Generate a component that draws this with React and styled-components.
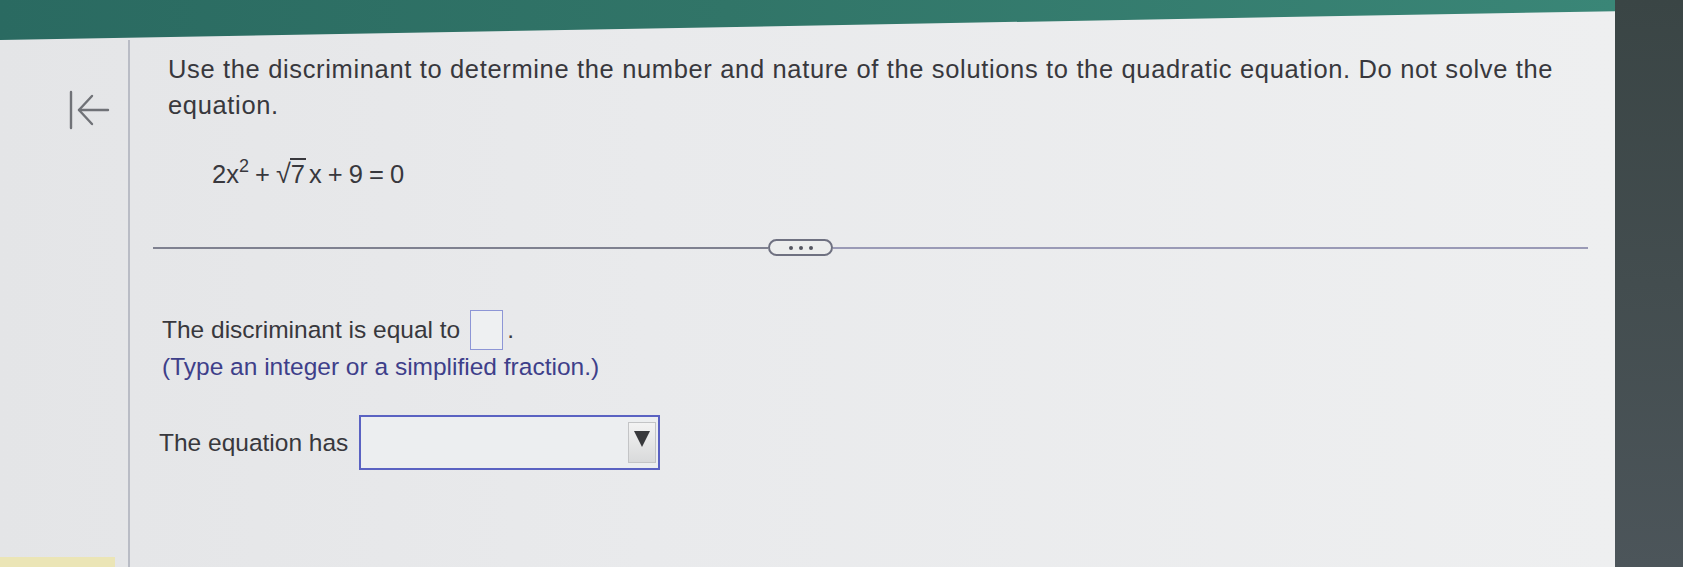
import React from 'react'
import styled, { createGlobalStyle } from 'styled-components'

const GlobalStyle = createGlobalStyle`
  html, body {
    margin: 0;
    padding: 0;
    background: #e9eaec;
    overflow: hidden;
  }
  * {
    box-sizing: border-box;
  }
`

const Screen = styled.div`
  display: flex;
  width: 1683px;
  height: 567px;
  font-family: "Liberation Sans", Arial, sans-serif;
  color: #38383d;
`

const Window = styled.div`
  flex: 1;
  display: flex;
  flex-direction: column;
  background: linear-gradient(90deg, #e4e5e7 0%, #e9eaec 40%, #eeeff0 100%);
`

const Header = styled.div`
  height: 40px;
  flex-shrink: 0;
  background: linear-gradient(90deg, #2a6a61 0%, #317568 45%, #3a8677 100%);
  clip-path: polygon(0 0, 100% 0, 100% 28%, 0 100%);
`

const Body = styled.div`
  flex: 1;
  display: flex;
`

const Sidebar = styled.div`
  width: 130px;
  flex-shrink: 0;
  display: flex;
  flex-direction: column;
  padding: 50px 0 0 68px;
  border-right: 2px solid #b9bcc5;
`

const BackButton = styled.button`
  width: 42px;
  height: 40px;
  padding: 0;
  border: none;
  background: transparent;
  color: #707277;
  cursor: pointer;
`

const Note = styled.div`
  margin-top: auto;
  margin-left: -68px;
  width: 115px;
  height: 10px;
  background: #ebe5b6;
`

const Content = styled.div`
  flex: 1;
  display: flex;
  flex-direction: column;
  padding-top: 11px;
`

const Question = styled.p`
  margin: 0 0 0 ${p => p.$indent}px;
  max-width: 1420px;
  font-size: 25.5px;
  line-height: 36px;
  letter-spacing: 0.65px;
`

const Equation = styled.div`
  margin: ${p => p.$top}px 0 0 ${p => p.$indent}px;
  font-size: 25.5px;
  line-height: 34px;
  white-space: pre;
  word-spacing: -1px;

  sup {
    font-size: 18px;
    line-height: 0;
    vertical-align: 11px;
  }
`

const Radical = styled.span`
  font-size: 27px;
  margin-right: -1px;
`

const Radicand = styled.span`
  border-top: 2px solid #38383d;
  padding: 0 1px;
  margin-right: 3px;
`

const DividerRow = styled.div`
  display: flex;
  align-items: center;
  margin: ${p => p.$top}px 0 0 ${p => p.$indent}px;
  width: 1435px;
  height: 17px;
`

const Rule = styled.div`
  height: 2px;
  background: ${p => p.$color};
  ${p => (p.$width ? `width: ${p.$width}px;` : 'flex: 1;')}
`

const MoreButton = styled.button`
  width: 65px;
  height: 17px;
  display: flex;
  align-items: center;
  justify-content: center;
  gap: 6px;
  padding: 0;
  border: 2px solid #6f7181;
  border-radius: 9px;
  background: #eceded;

  span {
    width: 4px;
    height: 4px;
    border-radius: 50%;
    background: #555660;
  }
`

const Row = styled.div`
  display: flex;
  align-items: center;
  margin: ${p => p.$top}px 0 0 ${p => p.$indent}px;
  font-size: 24.5px;
  line-height: ${p => p.$height}px;
  height: ${p => p.$height}px;
`

const Hint = styled.div`
  margin: ${p => p.$top}px 0 0 ${p => p.$indent}px;
  font-size: 24.5px;
  line-height: 30px;
  color: #3e3f8a;
`

const AnswerBox = styled.input`
  width: 33px;
  height: 40px;
  margin: 0 4px 0 10px;
  padding: 0;
  border: 1.5px solid #8d96d6;
  background: #eef0f2;
  outline: none;
`

const Select = styled.div`
  width: 301px;
  height: 55px;
  margin-left: 11px;
  display: flex;
  align-items: center;
  justify-content: flex-end;
  padding-right: 2px;
  border: 2px solid #5a62c2;
  background: #eceef0;
`

const SelectArrow = styled.div`
  width: 28px;
  height: 41px;
  display: flex;
  justify-content: center;
  padding-top: 8px;
  border: 1px solid #c3c4c6;
  background: linear-gradient(#f3f3f3, #d9dadb);

  &::after {
    content: '';
    width: 0;
    height: 0;
    border-left: 8px solid transparent;
    border-right: 8px solid transparent;
    border-top: 16px solid #38393c;
  }
`

const DarkEdge = styled.div`
  width: 68px;
  flex-shrink: 0;
  background: linear-gradient(180deg, #3a4545 0%, #434d4f 50%, #4c555a 100%);
`

function BackArrow() {
  return (
    <svg width="42" height="40" viewBox="0 0 42 40" fill="none" stroke="currentColor" strokeWidth="2.4" strokeLinecap="round" strokeLinejoin="round">
      <path d="M3 2 L3 38" />
      <path d="M11 20 L40 20" />
      <path d="M24 6 L11 20 L24 34" />
    </svg>
  )
}

export default function App() {
  return (
    <Screen>
      <GlobalStyle />
      <Window>
        <Header />
        <Body>
          <Sidebar>
            <BackButton aria-label="Back">
              <BackArrow />
            </BackButton>
            <Note />
          </Sidebar>
          <Content>
            <Question $indent={38}>
              Use the discriminant to determine the number and nature of the solutions to the quadratic equation. Do not solve the equation.
            </Question>
            <Equation $top={34} $indent={82}>
              2x<sup>2</sup> + <Radical>√</Radical><Radicand>7</Radicand>x + 9 = 0
            </Equation>
            <DividerRow $top={48} $indent={23}>
              <Rule $width={615} $color="#7f8190" />
              <MoreButton aria-label="More">
                <span />
                <span />
                <span />
              </MoreButton>
              <Rule $color="#9a9ab6" />
            </DividerRow>
            <Row $top={54} $indent={32} $height={40}>
              The discriminant is equal to
              <AnswerBox aria-label="discriminant" />.
            </Row>
            <Hint $top={2} $indent={32}>(Type an integer or a simplified fraction.)</Hint>
            <Row $top={33} $indent={29} $height={55}>
              The equation has
              <Select>
                <SelectArrow />
              </Select>
            </Row>
          </Content>
        </Body>
      </Window>
      <DarkEdge />
    </Screen>
  )
}
